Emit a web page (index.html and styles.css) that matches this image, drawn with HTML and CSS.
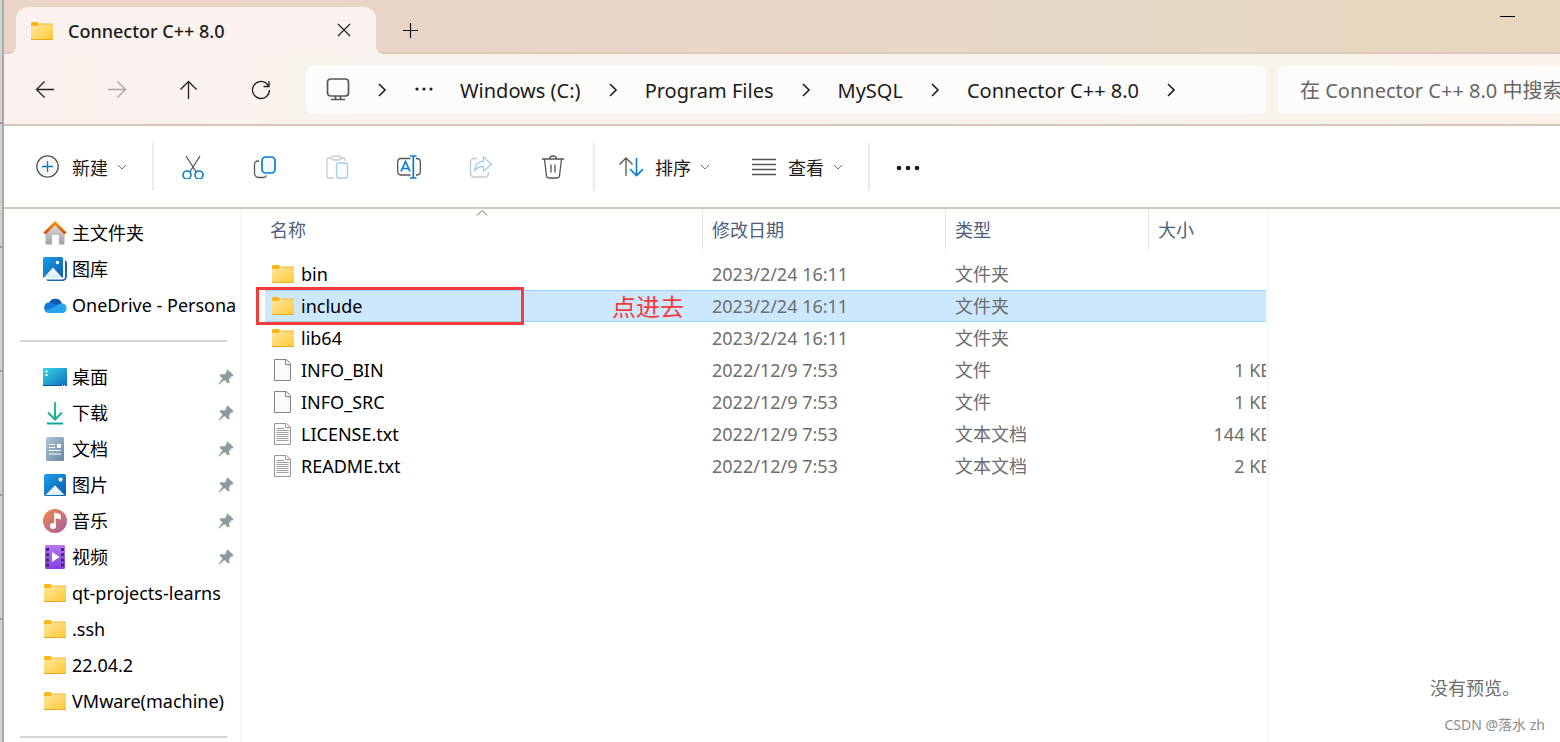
FILE: index.html
```
<!DOCTYPE html>
<html lang="zh-CN">
<head>
  <meta charset="UTF-8" />
  <meta name="viewport" content="width=device-width, initial-scale=1.0"/>
  <title>Connector C++ 8.0</title>
  <link rel="stylesheet" href="styles.css">
</head>
<body>

  <!-- Shared icons -->
  <svg class="defs" width="0" height="0" aria-hidden="true">
    <defs>
      <linearGradient id="gFolder" x1="0" y1="0" x2="1" y2="1"><stop offset="0" stop-color="#ffe8a0"/><stop offset="1" stop-color="#ffc937"/></linearGradient>
      <linearGradient id="gBlue" x1="0" y1="0" x2="1" y2="1"><stop offset="0" stop-color="#1e9fe8"/><stop offset="1" stop-color="#0a5cad"/></linearGradient>
      <linearGradient id="gRoof" x1="0" y1="0" x2="0" y2="1"><stop offset="0" stop-color="#f6930c"/><stop offset="1" stop-color="#d9480c"/></linearGradient>
      <linearGradient id="gWall" x1="0" y1="0" x2="0" y2="1"><stop offset="0" stop-color="#dedede"/><stop offset="1" stop-color="#a0a0a0"/></linearGradient>
      <linearGradient id="gDesk" x1="0" y1="0" x2="1" y2="1"><stop offset="0" stop-color="#36d8e6"/><stop offset="1" stop-color="#0e6cbf"/></linearGradient>
      <linearGradient id="gDown" x1="0" y1="0" x2="0" y2="24" gradientUnits="userSpaceOnUse"><stop offset="0" stop-color="#35c481"/><stop offset="1" stop-color="#0fa3a0"/></linearGradient>
      <linearGradient id="gDoc" x1="0" y1="0" x2="1" y2="1"><stop offset="0" stop-color="#b3c6da"/><stop offset="1" stop-color="#6784a3"/></linearGradient>
      <linearGradient id="gMusic" x1="0" y1="0" x2="1" y2="1"><stop offset="0" stop-color="#f08a4b"/><stop offset="1" stop-color="#a3609f"/></linearGradient>
      <linearGradient id="gVideo" x1="0" y1="0" x2="0" y2="1"><stop offset="0" stop-color="#b577f2"/><stop offset="1" stop-color="#8440df"/></linearGradient>
      <linearGradient id="gSnow" x1="0" y1="0" x2="0" y2="1"><stop offset="0" stop-color="#fff"/><stop offset="1" stop-color="#d8ecfb"/></linearGradient>
    </defs>
    <symbol id="folder" viewBox="0 0 24 24">
      <path d="M1 4.500q0-1.500 1.500-1.500h5l1.500 1.500v3H1z" fill="#f8b617"/>
      <path d="M1 7h6.500l2-2H23v15.500H1z" fill="url(#gFolder)"/>
      <path d="M9.500 5H23" stroke="#e9bb3e" stroke-width="1"/>
      <path d="M1 20.500h22" stroke="#e8a820" stroke-width="1"/>
    </symbol>
    <symbol id="file" viewBox="0 0 24 24">
      <path d="M3.500 1.500h12l4 4v17h-16z" fill="#fafafa" stroke="#858585"/>
      <path d="M14.500 1.500v5h5" fill="none" stroke="#858585"/>
    </symbol>
    <symbol id="textfile" viewBox="0 0 24 24">
      <path d="M3.500 1.500h12l4 4v17h-16z" fill="#fafafa" stroke="#9a9a9a"/>
      <path d="M14.500 1.500v4h5M5.500 6.500h8M5.500 8.500h12M5.500 10.500h12M5.500 12.500h12M5.500 14.500h12M5.500 16.500h12M5.500 18.500h12" fill="none" stroke="#a2a2a2"/>
    </symbol>
    <symbol id="pin" viewBox="0 0 16 16">
      <path d="M9.500.500l6 5.500-1 1.500-1.500 0-2 3 .500 3-1.500 1-3.500-3.500L1 15.500l-.500-.500L4.500 9.500 1.500 6.500 3 5l3.500.500 2-2.500-.300-1z" fill="#8f9ba3"/>
    </symbol>
    <symbol id="chevron" viewBox="0 0 12 14">
      <path d="M3 1l6 6-6 6" fill="none" stroke="#222" stroke-width="1.700"/>
    </symbol>
    <symbol id="down" viewBox="0 0 10 10">
      <path d="M1 3l4 4 4-4" fill="none" stroke="#777"/>
    </symbol>
  </svg>

  <!-- Edge of the window behind -->
  <div class="behind" aria-hidden="true"><i></i><i></i><i></i><i></i><i></i></div>

  <div class="window">

    <!-- Tabs -->
    <header class="titlebar">
      <div class="tab">
        <svg class="icon"><use href="#folder"/></svg>
        <span class="tab-title">Connector C++ 8.0</span>
        <button class="plain" aria-label="关闭标签页"><svg width="16" height="16"><path d="M2 1l12 12M14 1L2 13" fill="none" stroke="#222" stroke-width="1.200"/></svg></button>
      </div>
      <button class="plain new-tab" aria-label="新标签页"><svg width="16" height="16"><path d="M8.500 1v15M1 8.500h15" fill="none" stroke="#111" stroke-width="1.200"/></svg></button>
      <button class="plain minimize" aria-label="最小化"><svg width="16" height="16"><path d="M0 8.500h15" stroke="#000"/></svg></button>
    </header>

    <!-- Navigation -->
    <nav class="navbar">
      <button class="tool" aria-label="后退"><svg class="icon" viewBox="0 0 24 24"><path d="M21 11.500H3.500M11.500 3.500l-8 8 8 8" stroke="#222"/></svg></button>
      <button class="tool" aria-label="前进" disabled><svg class="icon" viewBox="0 0 24 24"><path d="M3 11.500h17.500M12.500 3.500l8 8-8 8" stroke="#aaa39f"/></svg></button>
      <button class="tool" aria-label="上移"><svg class="icon" viewBox="0 0 24 24"><path d="M11.500 21V3.500M3.500 11.500l8-8 8 8" stroke="#222"/></svg></button>
      <button class="tool" aria-label="刷新"><svg class="icon" viewBox="0 0 24 24"><path d="M20.500 12a8.500 8.500 0 1 1-3-6.500l2.500 2.500M20 3v5.500h-5.500" stroke="#222"/></svg></button>

      <div class="address">
        <svg class="icon monitor" viewBox="0 0 24 24"><rect x="1.500" y="1" width="21" height="17" rx="3"/><path d="M9.500 18v3.500M14.500 18v3.500M5 21.500h14"/></svg>
        <svg class="chevron"><use href="#chevron"/></svg>
        <button class="plain dots" aria-label="更多路径"><svg width="20" height="6"><circle cx="3" cy="2" r="1.600"/><circle cx="10" cy="2" r="1.600"/><circle cx="17" cy="2" r="1.600"/></svg></button>
        <a href="#">Windows (C:)</a>
        <svg class="chevron"><use href="#chevron"/></svg>
        <a href="#">Program Files</a>
        <svg class="chevron"><use href="#chevron"/></svg>
        <a href="#">MySQL</a>
        <svg class="chevron"><use href="#chevron"/></svg>
        <a href="#">Connector C++ 8.0</a>
        <svg class="chevron"><use href="#chevron"/></svg>
      </div>
      <input class="search" type="text" aria-label="搜索" placeholder="在 Connector C++ 8.0 中搜索">
    </nav>

    <!-- Commands -->
    <div class="toolbar">
      <button class="labelled first">
        <svg class="icon" viewBox="0 0 24 24"><circle cx="11.500" cy="11.500" r="10.700" fill="#f9f9f9" stroke="#555"/><path d="M11.500 6v11M6 11.500h11" stroke="#0a7bd4"/></svg>
        新建
        <svg class="down"><use href="#down"/></svg>
      </button>
      <span class="divider"></span>
      <button class="tool" aria-label="剪切"><svg class="icon" viewBox="0 0 24 24"><path d="M5 1l10.500 16.500M19 1L8.500 17.500" stroke="#555"/><circle cx="6" cy="20" r="4" stroke="#0a7bd4" stroke-width="1.600"/><circle cx="18" cy="20" r="4" stroke="#0a7bd4" stroke-width="1.600"/></svg></button>
      <button class="tool" aria-label="复制"><svg class="icon" viewBox="0 0 24 24"><path d="M6 6H5a3.500 3.500 0 0 0-3.500 3.500V18a4.500 4.500 0 0 0 4.500 4.500h4.500a3.500 3.500 0 0 0 3-2" stroke="#555"/><rect x="9" y="2" width="13" height="16" rx="3.500" fill="#f5f9fd" stroke="#0a7bd4" stroke-width="1.700"/></svg></button>
      <button class="tool" aria-label="粘贴" disabled><svg class="icon" viewBox="0 0 24 24"><path d="M7 3H4a2 2 0 0 0-2 2v16a2 2 0 0 0 2 2h5M16 3h2a2 2 0 0 1 2 2v1" stroke="#c9c9c9"/><rect x="7" y="1" width="9" height="4" rx="2" stroke="#c9c9c9"/><rect x="11.500" y="8" width="11" height="15" rx="2" fill="#f8fbfe" stroke="#a3cdef"/></svg></button>
      <button class="tool" aria-label="重命名"><svg class="icon" viewBox="0 0 24 24"><path d="M13.500 3.500H4A3.500 3.500 0 0 0 .700 7v9.500A3.500 3.500 0 0 0 4 20h9.500M19 3.500h1A3.500 3.500 0 0 1 23.300 7v9.500A3.500 3.500 0 0 1 20 20h-1" stroke="#555"/><path d="M4 16.500l4.500-10 4.500 10M5.500 13.500h6M16.300 1v22M13 1h6.500M13 23h6.500" stroke="#0a7bd4" stroke-width="1.700"/></svg></button>
      <button class="tool" aria-label="共享" disabled><svg class="icon" viewBox="0 0 24 24"><path d="M8 3.500H5A3.500 3.500 0 0 0 1.500 7v11.500A3.500 3.500 0 0 0 5 22h11a3.500 3.500 0 0 0 3.500-3.500V17" stroke="#c6c6c6"/><path d="M14.500 2l8 7.500-8 6.500v-4.500c-4-.200-6.500 1-9 4C6 10 9 6.500 14.500 6z" stroke="#a3cdef"/></svg></button>
      <button class="tool" aria-label="删除"><svg class="icon" viewBox="0 0 24 24"><path d="M1 4h22M8.500 4q0-3 3.500-3t3.500 3M3.500 4l2 17q.300 2 2.500 2h8q2.200 0 2.500-2l2-17M10 9.500v8M14 9.500v8" stroke="#555"/></svg></button>
      <span class="divider"></span>
      <button class="labelled">
        <svg class="icon" viewBox="0 0 24 24"><path d="M7 21V3.500M.500 9.500L7 3l6.500 6.500" stroke="#555"/><path d="M17.500 3v17.500M11 14l6.500 6.500L24 14" stroke="#0a7bd4" stroke-width="1.600"/></svg>
        排序
        <svg class="down"><use href="#down"/></svg>
      </button>
      <button class="labelled">
        <svg class="icon" viewBox="0 0 24 24"><path d="M0 4.500h24M0 9.500h24M0 14.500h24M0 19.500h24" stroke="#555"/></svg>
        查看
        <svg class="down"><use href="#down"/></svg>
      </button>
      <span class="divider"></span>
      <button class="tool dots" aria-label="更多"><svg width="26" height="8"><circle cx="3" cy="5" r="2.300"/><circle cx="12" cy="5" r="2.300"/><circle cx="21" cy="5" r="2.300"/></svg></button>
    </div>

    <main class="content">

      <!-- Sidebar -->
      <aside class="sidebar">
        <a href="#"><svg class="icon" viewBox="0 0 24 24"><path d="M2.500 12L12 3l9.500 9v10.500q0 1-1 1H16V14H9v9.500H3.500q-1 0-1-1z" fill="url(#gWall)"/><path d="M1.500 12.500L12 2l10.500 10.500" fill="none" stroke="url(#gRoof)" stroke-width="3"/></svg><span>主文件夹</span></a>
        <a href="#"><svg class="icon" viewBox="0 0 24 24"><path d="M22 3q2 1 2 3v13q0 5-5 5H6q-2 0-3-1.500h16q3 0 3-3z" fill="#1769b5"/><rect x="0" y="0" width="20" height="21" rx="1.500" fill="url(#gBlue)"/><path d="M.500 21L10 10.500 19.500 21z" fill="url(#gSnow)"/><circle cx="14.500" cy="5.500" r="1.700" fill="#fff"/></svg><span>图库</span></a>
        <a href="#"><svg class="icon" viewBox="0 0 24 24"><path d="M6 10a7 7 0 0 1 13 .500l-6 5z" fill="#0b5bb5"/><path d="M6 9.500q3-.500 5.500 1.500l6 4L4 19a5 5 0 0 1 2-9.500z" fill="#117ad6"/><path d="M11 14q5-4 8.500-3.500a4.800 4.800 0 0 1 0 9.500H5.500Q3 20 1.500 18z" fill="#28a4ea"/></svg><span>OneDrive - Persona</span></a>
        <hr>
        <a href="#"><svg class="icon" viewBox="0 0 24 24"><rect x="0" y="3" width="24" height="18" rx="1" fill="url(#gDesk)"/><path d="M0 20.500h24" stroke="#0c5597"/><path d="M2.500 5.500h2v2h-2zM2.500 9h2v2h-2zM19 20h1v1h-1zM21 20h1v1h-1z" fill="#fff"/></svg><span>桌面</span><svg class="pin"><use href="#pin"/></svg></a>
        <a href="#"><svg class="icon" viewBox="0 0 24 24"><path d="M12 1v17M5 11.500l7 7 7-7M4 22.500h16" fill="none" stroke="url(#gDown)" stroke-width="2"/></svg><span>下载</span><svg class="pin"><use href="#pin"/></svg></a>
        <a href="#"><svg class="icon" viewBox="0 0 24 24"><rect x="3" y="0" width="18" height="24" rx="1.500" fill="url(#gDoc)"/><path d="M6 7.500h6M6 10.500h6M6 13.500h12M6 17h12" stroke="#fff" stroke-width="1.200"/><path d="M14 7h4v4h-4z" fill="#fff"/></svg><span>文档</span><svg class="pin"><use href="#pin"/></svg></a>
        <a href="#"><svg class="icon" viewBox="0 0 24 24"><rect x="1" y="1" width="22" height="22" rx="1.500" fill="url(#gBlue)"/><path d="M2.500 22L12 12.500l9.500 9.500z" fill="url(#gSnow)"/><circle cx="17.500" cy="6.500" r="2" fill="#fff"/></svg><span>图片</span><svg class="pin"><use href="#pin"/></svg></a>
        <a href="#"><svg class="icon" viewBox="0 0 24 24"><circle cx="12" cy="12" r="12" fill="url(#gMusic)"/><circle cx="10" cy="17" r="3" fill="#fff"/><path d="M12 17V4.500l5 1.500v3.500l-5-1.500" fill="#fff" stroke="#fff" stroke-width="1.500"/></svg><span>音乐</span><svg class="pin"><use href="#pin"/></svg></a>
        <a href="#"><svg class="icon" viewBox="0 0 24 24"><rect x="2" y="0" width="20" height="24" rx="1.500" fill="url(#gVideo)"/><path d="M4.500 3v20M19.500 3v20" stroke="#45277d" stroke-width="3" stroke-dasharray="3 2.200"/><path d="M9 7l7.500 5L9 17z" fill="#fff"/></svg><span>视频</span><svg class="pin"><use href="#pin"/></svg></a>
        <a href="#"><svg class="icon"><use href="#folder"/></svg><span>qt-projects-learns</span></a>
        <a href="#"><svg class="icon"><use href="#folder"/></svg><span>.ssh</span></a>
        <a href="#"><svg class="icon"><use href="#folder"/></svg><span>22.04.2</span></a>
        <a href="#"><svg class="icon"><use href="#folder"/></svg><span>VMware(machine)</span></a>
        <hr>
      </aside>

      <!-- File list -->
      <section class="files">
        <table>
          <colgroup><col class="c-name"><col class="c-date"><col class="c-type"><col class="c-size"></colgroup>
          <thead>
            <tr>
              <th>名称<svg class="sort" width="12" height="8"><path d="M1 6.500l5-5 5 5" fill="none" stroke="#666"/></svg></th>
              <th>修改日期</th><th>类型</th><th>大小</th>
            </tr>
          </thead>
          <tbody>
            <tr><td><div class="name"><svg class="icon"><use href="#folder"/></svg>bin</div></td><td>2023/2/24 16:11</td><td class="type">文件夹</td><td></td></tr>
            <tr class="selected"><td><div class="name"><svg class="icon"><use href="#folder"/></svg>include</div><span class="mark"></span><span class="note">点进去</span></td><td>2023/2/24 16:11</td><td class="type">文件夹</td><td></td></tr>
            <tr><td><div class="name"><svg class="icon"><use href="#folder"/></svg>lib64</div></td><td>2023/2/24 16:11</td><td class="type">文件夹</td><td></td></tr>
            <tr><td><div class="name"><svg class="icon"><use href="#file"/></svg>INFO_BIN</div></td><td>2022/12/9 7:53</td><td class="type">文件</td><td>1 KB</td></tr>
            <tr><td><div class="name"><svg class="icon"><use href="#file"/></svg>INFO_SRC</div></td><td>2022/12/9 7:53</td><td class="type">文件</td><td>1 KB</td></tr>
            <tr><td><div class="name"><svg class="icon"><use href="#textfile"/></svg>LICENSE.txt</div></td><td>2022/12/9 7:53</td><td class="type">文本文档</td><td>144 KB</td></tr>
            <tr><td><div class="name"><svg class="icon"><use href="#textfile"/></svg>README.txt</div></td><td>2022/12/9 7:53</td><td class="type">文本文档</td><td>2 KB</td></tr>
          </tbody>
        </table>
      </section>

      <!-- Preview -->
      <section class="preview"><p>没有预览。</p></section>
    </main>
  </div>

  <div class="watermark">CSDN @落水 zh</div>
</body>
</html>
```
FILE: styles.css
```
* { box-sizing:border-box; }
body {
  margin:0; height:100vh; overflow:hidden; display:flex; background:#fff;
  font-family:"Noto Sans","Noto Sans CJK SC",sans-serif; font-size:18px; color:#000;
}
a { color:inherit; text-decoration:none; }
button { border:none; background:none; padding:0; font:inherit; color:inherit; }
svg { display:block; flex:none; }
.defs { position:absolute; }
.icon { width:24px; height:24px; }
.down { width:10px; height:10px; }

/* sliver of the window underneath */
.behind {
  flex:none; width:4px; background:#d2d2d2; border-right:2px solid #a9a9a9;
  display:flex; flex-direction:column; justify-content:space-evenly;
}
.behind i { height:2px; background:#999; }

.window { flex:1; min-width:0; display:flex; flex-direction:column; }

/* tabs */
.titlebar {
  display:flex; align-items:center; height:54px; flex:none; padding-left:12px;
  background:linear-gradient(90deg,#e9d4c7,#e9d6c8 40%,#e5d9c6 75%,#e9d6be);
  border-bottom:2px solid #dcc8b6;
}
.tab {
  position:relative; align-self:flex-end; margin-bottom:-2px;
  width:360px; height:47px; padding:0 24px 0 14px;
  display:flex; align-items:center; background:#f9f2ee; border-radius:12px 12px 0 0;
}
.tab::before, .tab::after {
  content:""; position:absolute; bottom:0; width:6px; height:6px;
}
.tab::before { left:-6px; background:radial-gradient(circle at 0 0,transparent 5px,#f9f2ee 6px); }
.tab::after { right:-6px; background:radial-gradient(circle at 100% 0,transparent 5px,#f9f2ee 6px); }
.tab-title { flex:1; margin-left:14px; font-size:18px; font-weight:500; color:#1b1b1b; }
.new-tab { margin-left:26px; margin-top:8px; }
.minimize { margin-left:auto; margin-right:44px; margin-bottom:20px; }

/* navigation */
.navbar {
  display:flex; align-items:center; flex:none; height:72px; padding:2px 0 0 5px;
  background:linear-gradient(90deg,#fbf1ee,#f8f3ee 25%,#f8f2ee 70%,#f8f3ed 85%,#faf1eb);
  border-bottom:2px solid #d8c5b9; overflow:hidden;
}
.tool { width:72px; height:48px; flex:none; display:flex; align-items:center; justify-content:center; }
.tool .icon, .labelled .icon { fill:none; stroke-width:1.300; }
.address {
  flex:1; min-width:0; height:48px; margin-left:9px; padding-left:20px;
  display:flex; align-items:center; gap:26px; overflow:hidden; white-space:nowrap;
  background:#fdfcfa; border-radius:6px; font-size:20px; color:#1b1b1b;
}
.monitor { fill:none; stroke:#555; stroke-width:1.700; }
.chevron { width:12px; height:14px; }
.dots { fill:#1b1b1b; }
.search {
  flex:none; width:322px; height:48px; margin:0 -40px 0 12px; padding:0 22px;
  border:none; border-radius:6px; background:#fdfcfa;
  font-family:inherit; font-size:20px; color:#1b1b1b;
}
.search::placeholder { color:#666; opacity:1; }

/* commands */
.toolbar {
  display:flex; align-items:center; flex:none; height:83px;
  border-bottom:2px solid #d8c5b9;
}
.labelled { display:flex; align-items:center; height:48px; padding:0 21px; white-space:nowrap; color:#1b1b1b; }
.labelled .icon { margin-right:12px; }
.labelled .down { margin-left:9px; }
.first { margin-left:11px; }
.divider { width:2px; height:48px; margin:0 3px 0 4px; background:#ececec; }

.content { flex:1; min-height:0; display:flex; }

/* sidebar */
.sidebar { flex:none; width:238px; padding-top:6px; border-right:2px solid #f5f5f5; overflow:hidden; }
.sidebar a {
  display:flex; align-items:center; height:36px; gap:5px; padding:0 6px 0 39px;
  line-height:24px; white-space:nowrap;
}
.sidebar a span { flex:1; }
.sidebar hr { height:2px; margin:17px 13px 17px 16px; border:none; background:#d5d5d5; }
.pin { width:16px; height:16px; }

/* file list */
.files { flex:1; min-width:0; margin-right:1px; padding-left:23px; overflow:hidden; }
table { table-layout:fixed; width:1016px; border-collapse:separate; border-spacing:0; }
.c-name { width:438px; }
.c-date { width:243px; }
.c-type { width:203px; }
.c-size { width:132px; }
th {
  position:relative; height:40px; padding:0 9px; text-align:left; font-weight:400;
  color:#4c607a; border-right:1px solid #e5e5e5;
}
th:first-child { padding-left:5px; }
th:last-child { border-right:none; }
.sort { position:absolute; top:0; left:50%; margin-left:-8px; }
tbody::before { content:""; display:block; height:9px; }
td { position:relative; height:32px; padding:0 9px; line-height:24px; color:#6d6d6d; white-space:nowrap; }
td:first-child { padding-left:6px; color:#000; }
td:last-child { text-align:right; }
.name { display:flex; align-items:center; gap:6px; }
.selected td { background:#cce8ff; box-shadow:inset 0 1px #99d1ff,inset 0 -1px #99d1ff; }
.mark { position:absolute; left:-9px; top:-3px; width:268px; height:38px; border:3px solid #f93a3a; }
.note { position:absolute; left:347px; top:5px; font-size:24px; color:#f93a3a; }

/* preview */
.preview {
  flex:none; width:293px; border-left:2px solid #f5f5f5;
  display:flex; align-items:flex-end; justify-content:flex-end;
}
.preview p { margin:0 40px 42px 0; color:#6d6d6d; }

.watermark { position:absolute; right:15px; bottom:7px; font-size:14px; line-height:20px; color:#8d8d8d; }
```
